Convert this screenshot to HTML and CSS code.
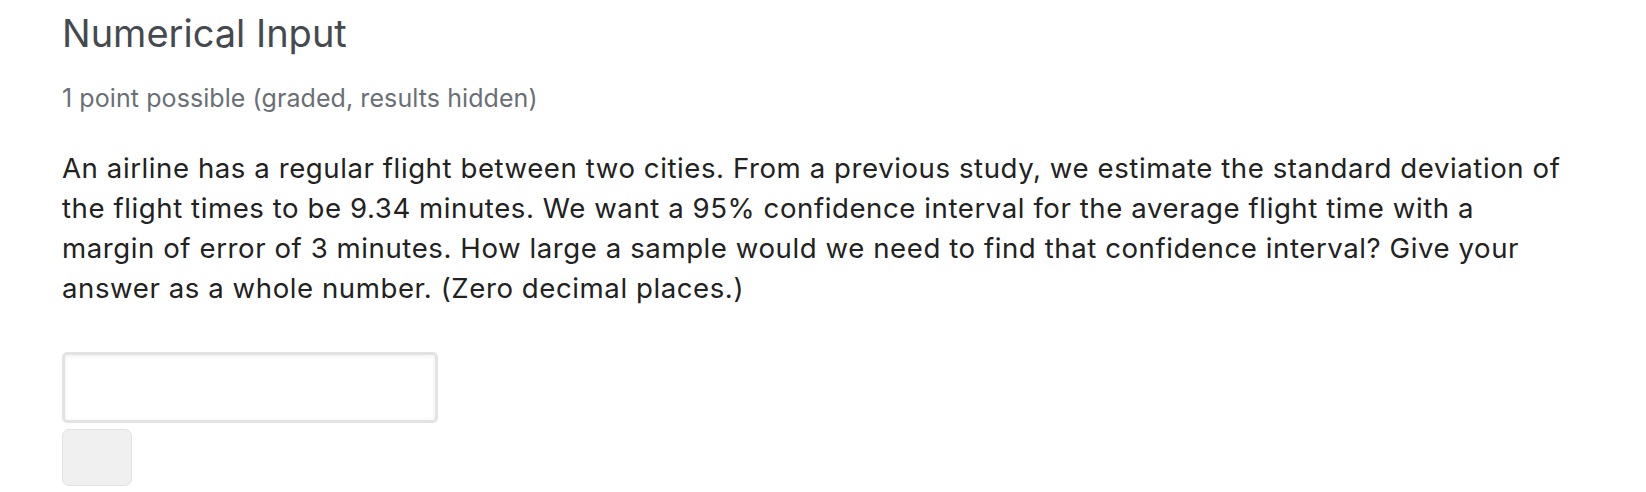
FILE: index.html
```html
<!DOCTYPE html>
<html>
<head>
<meta charset="utf-8">
<link rel="stylesheet" href="styles.css">
</head>
<body>
<div class="problem">
  <h2 class="title">Numerical Input</h2>
  <div class="meta">1 point possible (graded, results hidden)</div>
  <p class="question">An airline has a regular flight between two cities. From a previous study, we estimate the standard deviation of the flight times to be 9.34 minutes. We want a 95% confidence interval for the average flight time with a margin of error of 3 minutes. How large a sample would we need to find that confidence interval? Give your answer as a whole number. (Zero decimal places.)</p>
  <div class="answer">
    <input class="field" type="text">
    <button class="submit" type="button"></button>
  </div>
</div>
</body>
</html>
```
FILE: styles.css
```css
html, body { margin: 0; padding: 0; background: #fff; }
body { font-family: Inter, "Noto Sans", sans-serif; color: #222; }
.problem { padding: 10px 76px 0 62px; }
.title { margin: 0; font-size: 38px; font-weight: 400; color: #454a50; line-height: 46px; }
.meta { margin-top: 27px; font-size: 25px; color: #6a6f75; line-height: 30px; letter-spacing: 0.08px; }
.question { margin: 35px 0 0 0; font-size: 27.6px; line-height: 40px; color: #222; letter-spacing: 0.57px; }
.answer { margin-top: 44px; display: flex; flex-direction: column; align-items: flex-start; gap: 6px; }
.field { width: 376px; height: 71px; box-sizing: border-box; border: 3px solid #e3e3e3; border-radius: 5px; box-shadow: inset 0 1px 4px rgba(0,0,0,0.08); background: #fff; margin: 0; }
.submit { width: 70px; height: 57px; box-sizing: border-box; border: 1px solid #e2e2e2; border-radius: 7px; background: #f0f0f0; margin: 0; padding: 0; }
```
